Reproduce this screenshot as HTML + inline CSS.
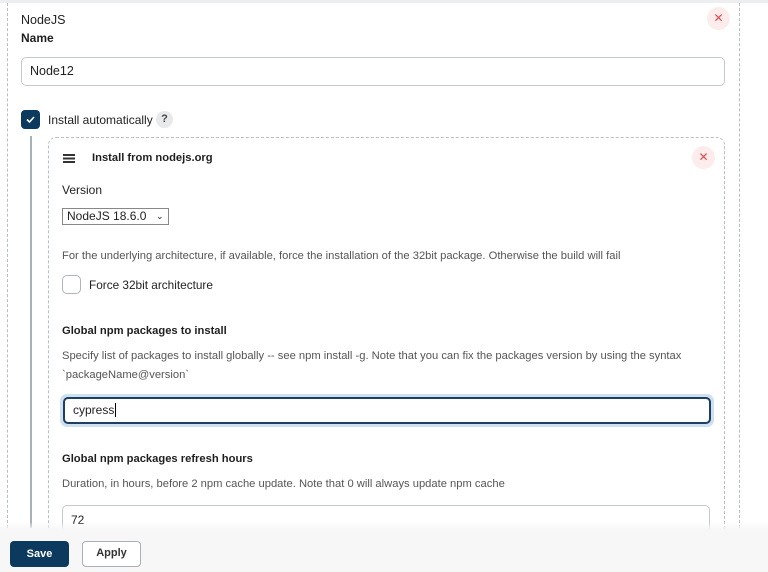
<!DOCTYPE html>
<html><head><style>
*{box-sizing:border-box;margin:0;padding:0}
body{width:768px;height:572px;overflow:hidden;background:#fff;font-family:"Liberation Sans",Arial,sans-serif;color:#1f1f1f;position:relative;font-size:12px}
.a{position:absolute;white-space:nowrap}
.b{font-weight:bold}
.dv{position:absolute;border-left:1px dashed #b8bec6;width:0}
.x{position:absolute;width:23px;height:23px;border-radius:50%;background:#fdecec;color:#e5484d;font-size:12px;text-align:center;line-height:23px}
.inp{position:absolute;border:1.5px solid #c4c9cf;border-radius:5px;background:#fff;font-size:12.5px;padding-left:8px}
.g{color:#555;font-size:11.2px}
</style></head><body>
<div class="a" style="left:0;top:0;width:768px;height:3px;background:#eceef0"></div>
<div class="dv" style="left:7px;top:3px;height:525px"></div>
<div class="dv" style="left:739px;top:3px;height:525px"></div>
<div class="a" style="left:21px;top:13px;font-size:12.5px">NodeJS</div>
<div class="a b" style="left:21px;top:31px;font-size:12px">Name</div>
<div class="x" style="left:707px;top:7px">✕</div>
<div class="inp" style="left:21px;top:57px;width:704px;height:29px;line-height:26px">Node12</div>
<div class="a" style="left:21px;top:110px;width:19px;height:19px;border-radius:4px;background:#0b3a5e"></div>
<svg class="a" style="left:24px;top:113px" width="13" height="13"><path d="M3 6.5 L5.5 9 L10 4" stroke="#fff" stroke-width="1.6" fill="none"/></svg>
<div class="a" style="left:48px;top:113px;font-size:12px">Install automatically</div>
<div class="a" style="left:156px;top:111px;width:17px;height:17px;border-radius:50%;background:#e8e9eb;font-size:11px;text-align:center;line-height:17px;font-weight:bold;color:#444">?</div>
<div class="a" style="left:30px;top:136px;width:2px;height:392px;background:#a8b0b8"></div>
<div class="a" style="left:48px;top:137px;width:677px;height:400px;border:1px dashed #b8bec6;border-radius:8px"></div>
<div class="a" style="left:63px;top:154px;width:12px;height:1.5px;background:#333;box-shadow:0 3.5px 0 #333,0 7px 0 #333"></div>
<div class="a b" style="left:92px;top:152px;font-size:11.2px">Install from nodejs.org</div>
<div class="x" style="left:692px;top:146px">✕</div>
<div class="a" style="left:62px;top:183px;font-size:12px">Version</div>
<div class="a" style="left:62px;top:208px;width:107px;height:17px;border:1px solid #888;font-size:12px;line-height:15px;padding-left:4px">NodeJS 18.6.0<span style="position:absolute;left:93px;top:0;font-size:9px">⌄</span></div>
<div class="a g" style="left:62px;top:250px">For the underlying architecture, if available, force the installation of the 32bit package. Otherwise the build will fail</div>
<div class="a" style="left:62px;top:275px;width:19px;height:19px;border:1.5px solid #b0b6bd;border-radius:5px"></div>
<div class="a" style="left:89px;top:278px;font-size:11.8px">Force 32bit architecture</div>
<div class="a b" style="left:62px;top:325px;font-size:11.2px">Global npm packages to install</div>
<div class="a g" style="left:62px;top:350px">Specify list of packages to install globally -- see npm install -g. Note that you can fix the packages version by using the syntax</div>
<div class="a g" style="left:62px;top:369px">`packageName@version`</div>
<div class="a" style="left:60px;top:394px;width:654px;height:33px;border-radius:7px;background:#cfe0ef"></div>
<div class="inp" style="left:63px;top:397px;width:648px;height:27px;border:2px solid #1d3f63;line-height:23px;font-size:12px">cypress<span style="border-left:1px solid #000;margin-left:1px"></span></div>
<div class="a b" style="left:62px;top:453px;font-size:11.2px">Global npm packages refresh hours</div>
<div class="a g" style="left:62px;top:478px">Duration, in hours, before 2 npm cache update. Note that 0 will always update npm cache</div>
<div class="inp" style="left:62px;top:505px;width:648px;height:30px;line-height:28px;font-size:12px">72</div>
<div class="a" style="left:0;top:522px;width:768px;height:8px;background:linear-gradient(rgba(245,245,246,0),#f6f6f7)"></div>
<div class="a" style="left:0;top:529px;width:768px;height:43px;background:#f7f7f8"></div>
<div class="a b" style="left:10px;top:541px;width:59px;height:26px;border-radius:4px;background:#0b3a5e;color:#fff;font-size:11px;text-align:center;line-height:26px">Save</div>
<div class="a b" style="left:82px;top:541px;width:59px;height:26px;border-radius:4px;border:1.5px solid #a9b0b8;background:#fff;color:#333;font-size:11px;text-align:center;line-height:23px">Apply</div>
</body></html>
